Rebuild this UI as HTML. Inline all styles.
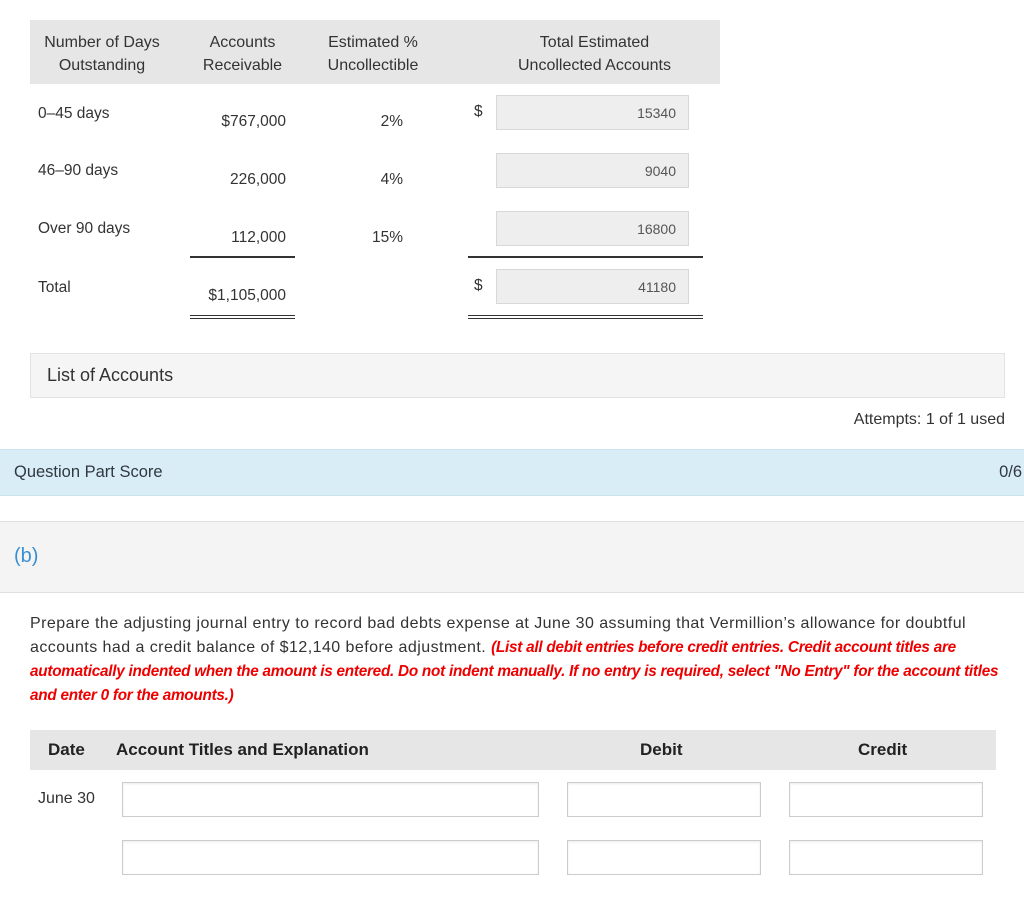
<!DOCTYPE html>
<html><head><meta charset="utf-8"><style>
body{margin:0;width:1024px;height:910px;background:#fff;font-family:"Liberation Sans",sans-serif;color:#333;position:relative;overflow:hidden}
.a{position:absolute;white-space:nowrap}
.inp{position:absolute;background:#eee;border:1px solid #d8d8d8;box-sizing:border-box;height:35px;width:193px;left:496px;font-size:14px;color:#555;text-align:right;padding-right:12px;line-height:35px}
.w{position:absolute;background:#fff;border:1px solid #ccc;box-sizing:border-box;height:35px;box-shadow:inset 0 1px 2px rgba(0,0,0,.08)}
.hd{font-size:16px;text-align:center;color:#333}
.c{font-size:15.5px}
.red{color:#e00;font-weight:bold;font-style:italic;letter-spacing:-0.25px;font-size:15.3px}
</style></head><body>
<div class="a" style="left:30px;top:20px;width:690px;height:64px;background:#e6e6e6"></div>
<div class="a hd" style="left:30px;top:31px;width:144px;line-height:23px">Number of Days<br>Outstanding</div>
<div class="a hd" style="left:190px;top:31px;width:105px;line-height:23px">Accounts<br>Receivable</div>
<div class="a hd" style="left:318px;top:31px;width:110px;line-height:23px">Estimated %<br>Uncollectible</div>
<div class="a hd" style="left:496px;top:31px;width:197px;line-height:23px">Total Estimated<br>Uncollected Accounts</div>

<div class="a c" style="left:38px;top:105px">0–45 days</div>
<div class="a c" style="left:38px;top:162px">46–90 days</div>
<div class="a c" style="left:38px;top:220px">Over 90 days</div>
<div class="a c" style="left:38px;top:279px">Total</div>

<div class="a c" style="right:738px;top:113px">$767,000</div>
<div class="a c" style="right:738px;top:171px">226,000</div>
<div class="a c" style="right:738px;top:229px">112,000</div>
<div class="a c" style="right:738px;top:287px">$1,105,000</div>

<div class="a c" style="right:621px;top:113px">2%</div>
<div class="a c" style="right:621px;top:171px">4%</div>
<div class="a c" style="right:621px;top:229px">15%</div>

<div class="a c" style="left:474px;top:103px">$</div>
<div class="a c" style="left:474px;top:277px">$</div>
<div class="inp" style="top:95px">15340</div>
<div class="inp" style="top:153px">9040</div>
<div class="inp" style="top:211px">16800</div>
<div class="inp" style="top:269px">41180</div>

<div class="a" style="left:190px;top:256px;width:105px;height:2px;background:#333"></div>
<div class="a" style="left:190px;top:315px;width:105px;height:1px;background:#333"></div>
<div class="a" style="left:190px;top:318px;width:105px;height:1px;background:#333"></div>
<div class="a" style="left:468px;top:256px;width:235px;height:2px;background:#333"></div>
<div class="a" style="left:468px;top:315px;width:235px;height:1px;background:#333"></div>
<div class="a" style="left:468px;top:318px;width:235px;height:1px;background:#333"></div>

<div class="a" style="left:30px;top:353px;width:975px;height:45px;background:#f5f5f5;border:1px solid #e3e3e3;box-sizing:border-box"></div>
<div class="a" style="left:47px;top:365px;font-size:18px">List of Accounts</div>

<div class="a" style="right:19px;top:411px;font-size:16px">Attempts: 1 of 1 used</div>

<div class="a" style="left:0;top:449px;width:1024px;height:47px;background:#d9edf7;border-top:1px solid #c9e3ef;border-bottom:1px solid #c9e3ef;box-sizing:border-box"></div>
<div class="a" style="left:14px;top:463px;font-size:16.5px;color:#31383f">Question Part Score</div>
<div class="a" style="right:2px;top:463px;font-size:16.5px;color:#31383f">0/6</div>

<div class="a" style="left:0;top:521px;width:1024px;height:72px;background:#f4f4f4;border-top:1px solid #e0e0e0;border-bottom:1px solid #e0e0e0;box-sizing:border-box"></div>
<div class="a" style="left:14px;top:545px;font-size:20px;color:#3a8fd0">(b)</div>

<div class="a" style="left:30px;top:612px;font-size:16px;line-height:24px;letter-spacing:0.45px">Prepare the adjusting journal entry to record bad debts expense at June 30 assuming that Vermillion’s allowance for doubtful<br>accounts had a credit balance of $12,140 before adjustment. <span class="red">(List all debit entries before credit entries. Credit account titles are</span><br><span class="red">automatically indented when the amount is entered. Do not indent manually. If no entry is required, select "No Entry" for the account titles</span><br><span class="red">and enter 0 for the amounts.)</span></div>

<div class="a" style="left:30px;top:730px;width:966px;height:40px;background:#e6e6e6"></div>
<div class="a" style="left:48px;top:740px;font-size:17px;font-weight:bold;color:#222">Date</div>
<div class="a" style="left:116px;top:740px;font-size:17px;font-weight:bold;color:#222">Account Titles and Explanation</div>
<div class="a" style="left:640px;top:740px;font-size:17px;font-weight:bold;color:#222">Debit</div>
<div class="a" style="left:858px;top:740px;font-size:17px;font-weight:bold;color:#222">Credit</div>

<div class="a" style="left:38px;top:790px;font-size:16px">June 30</div>
<div class="w" style="left:122px;top:782px;width:417px"></div>
<div class="w" style="left:567px;top:782px;width:194px"></div>
<div class="w" style="left:789px;top:782px;width:194px"></div>
<div class="w" style="left:122px;top:840px;width:417px"></div>
<div class="w" style="left:567px;top:840px;width:194px"></div>
<div class="w" style="left:789px;top:840px;width:194px"></div>
</body></html>
